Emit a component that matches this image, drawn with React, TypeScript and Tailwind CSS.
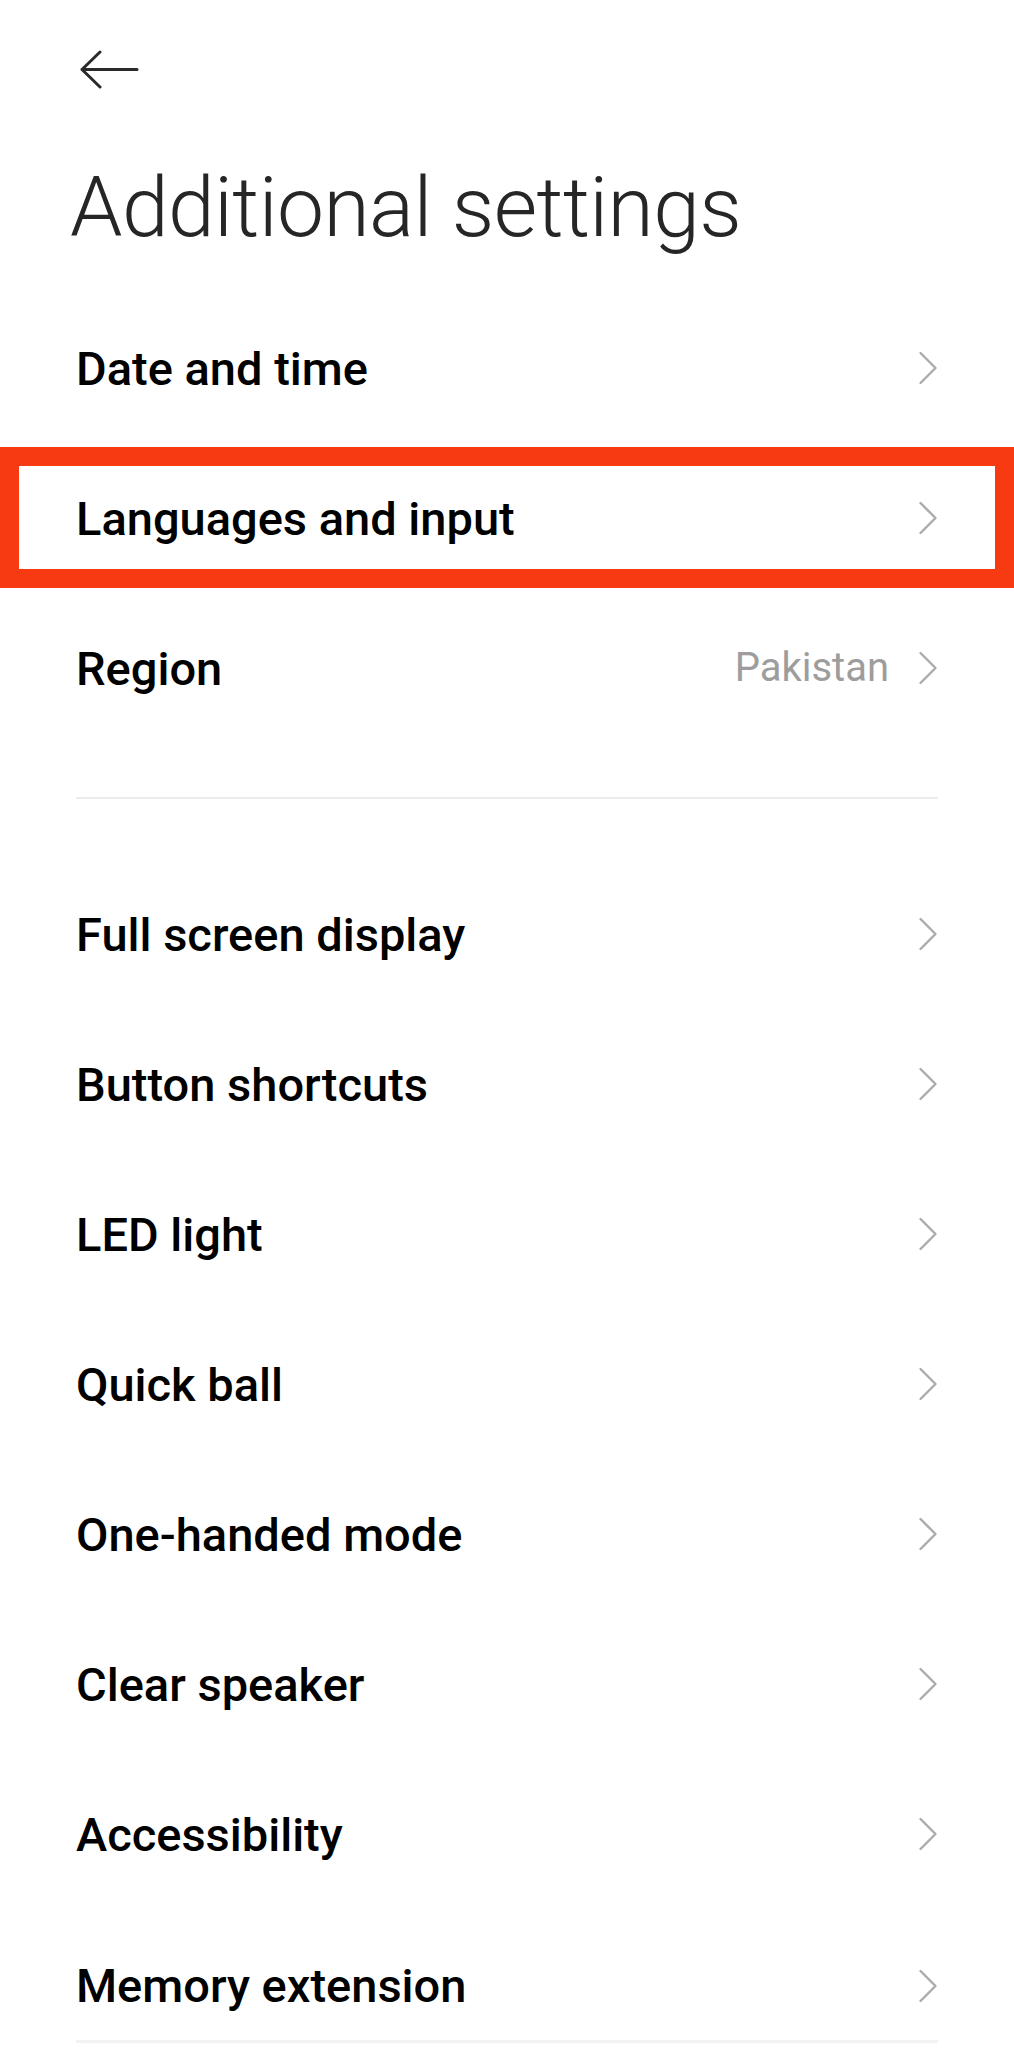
import React from "react";

const Chevron = () => (
  <svg width="20" height="34" viewBox="0 0 20 34" fill="none" className="shrink-0">
    <path d="M2.5 2 L17.5 17 L2.5 32" stroke="#ababab" strokeWidth="2.4" strokeLinecap="round" strokeLinejoin="round" />
  </svg>
);

const Row = ({ label, value, extra = "" }: { label: string; value?: string; extra?: string }) => (
  <div className={`flex h-[150px] items-center justify-between pl-[76px] pr-[76px] ${extra}`}>
    <span className="text-[47px] font-medium text-black leading-none">{label}</span>
    <div className="flex items-center gap-[29px]">
      {value && <span className="text-[40px] text-[#9d9d9d] leading-none">{value}</span>}
      <Chevron />
    </div>
  </div>
);

export default function App() {
  return (
    <div className="w-[1014px] h-[2048px] bg-white overflow-hidden" style={{ fontFamily: "Roboto, 'Noto Sans', sans-serif" }}>
      <div className="h-[130px] pl-[80px] pt-[50px]">
        <svg width="60" height="40" viewBox="0 0 60 40" fill="none">
          <path d="M20 2 L2 19.5 L20 37 M2 19.5 L57 19.5" stroke="#2a2a2a" strokeWidth="3" strokeLinecap="round" strokeLinejoin="round" />
        </svg>
      </div>
      <div className="h-[163px] pl-[70px]">
        <h1 className="text-[84px] font-light text-[#262626] leading-none pt-[36px] tracking-[-0.6px]">Additional settings</h1>
      </div>
      <Row label="Date and time" />
      <div className="relative">
        <Row label="Languages and input" />
        <div className="absolute left-0 right-0 top-[4px] bottom-[5px] border-[19px] border-[#f73a12]" />
      </div>
      <Row label="Region" value="Pakistan" />
      <div className="h-[116px] flex items-center pl-[76px] pr-[76px]">
        <div className="h-[2px] w-full bg-[#ececec] mt-[-6px]" />
      </div>
      <Row label="Full screen display" />
      <Row label="Button shortcuts" />
      <Row label="LED light" />
      <Row label="Quick ball" />
      <Row label="One-handed mode" />
      <Row label="Clear speaker" />
      <Row label="Accessibility" />
      <div className="flex h-[131px] pt-[22px] items-center justify-between pl-[76px] pr-[76px]">
        <span className="text-[47px] font-medium text-black leading-none">Memory extension</span>
        <Chevron />
      </div>
      <div className="mx-[76px] h-[3px] bg-[#f2f2f2]" />
    </div>
  );
}
